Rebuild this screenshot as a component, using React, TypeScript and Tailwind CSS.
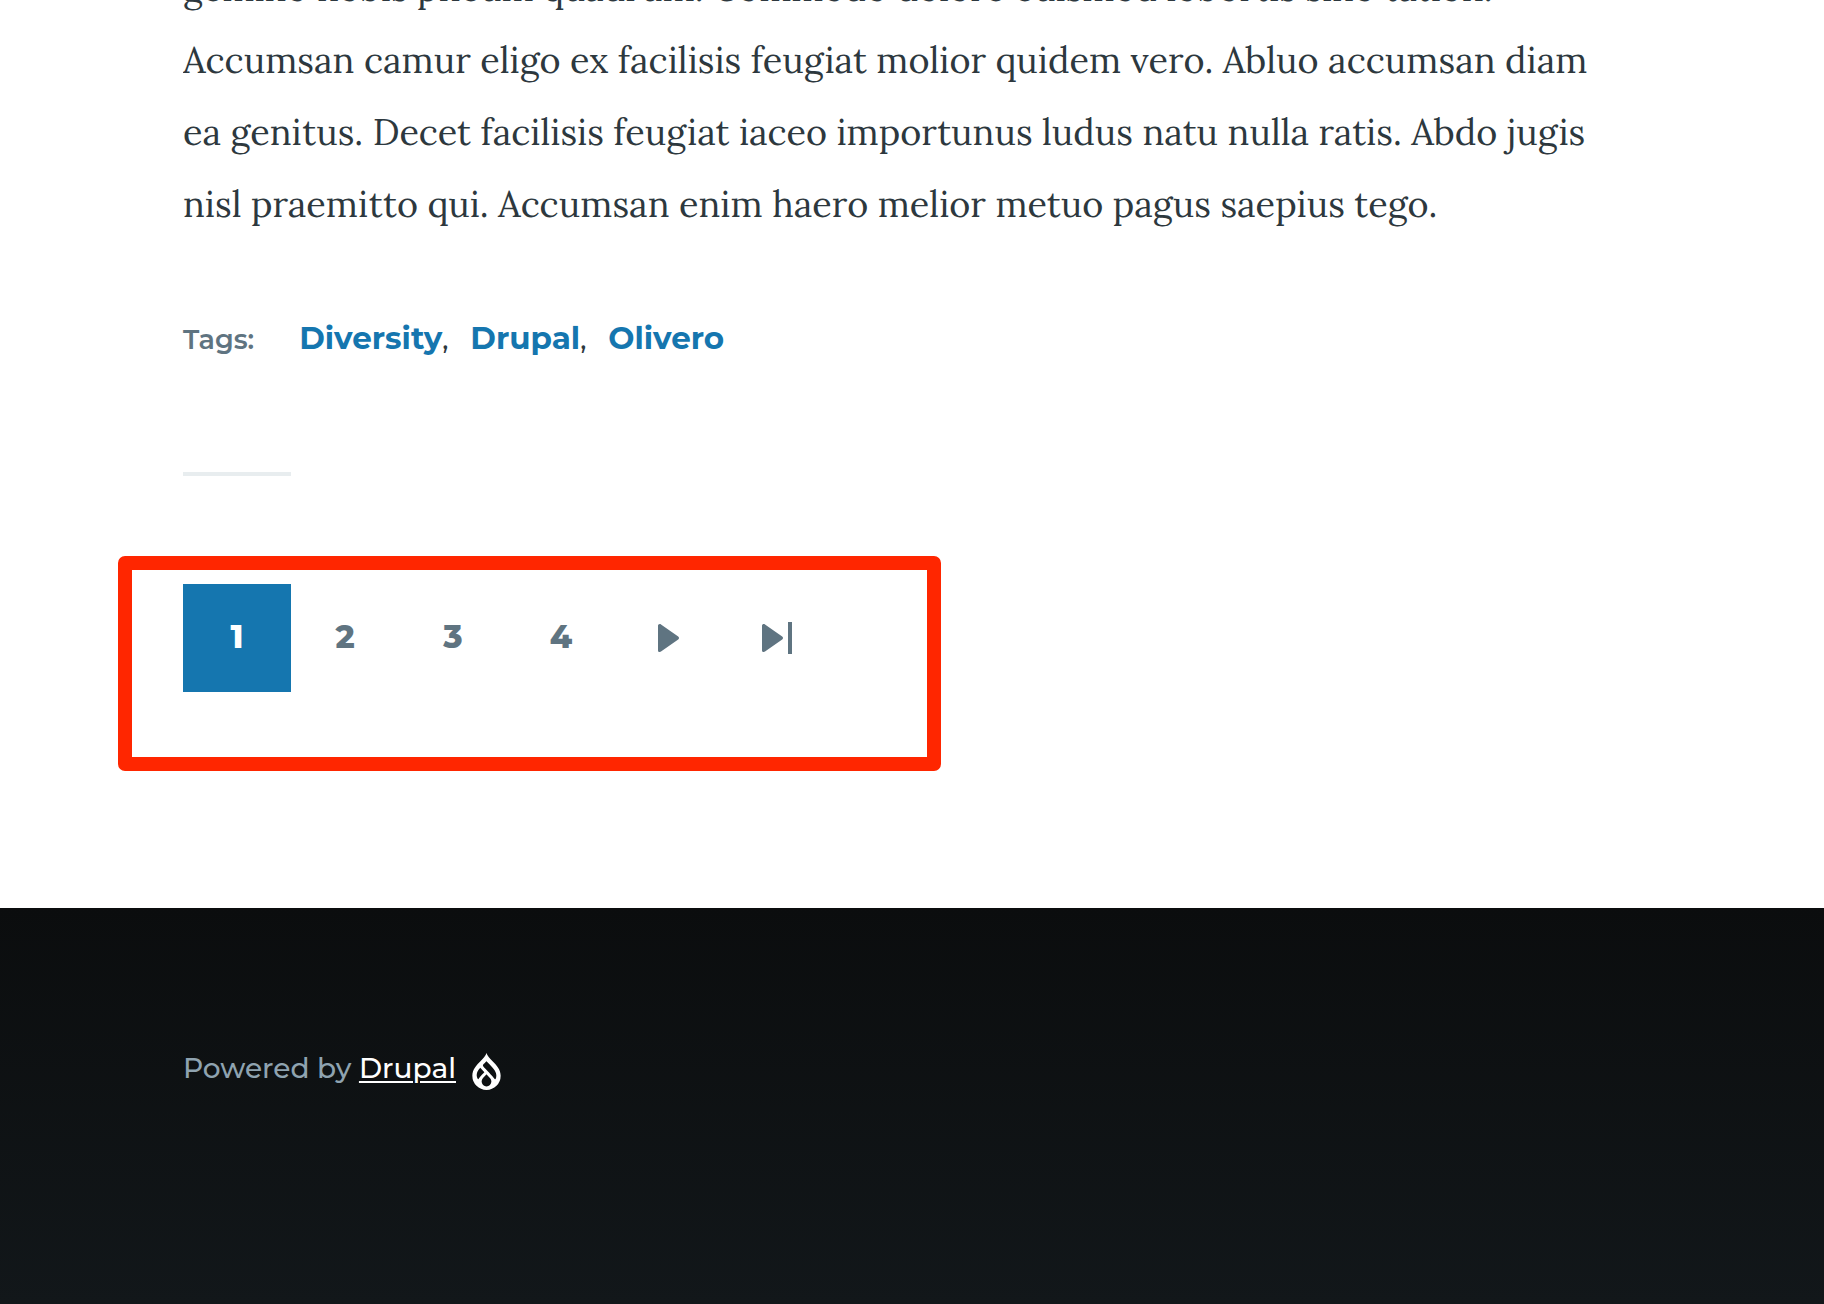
import { FC } from "react";
import { SiDrupal } from "react-icons/si";

const tags = ["Diversity", "Drupal", "Olivero"];
const pages = ["1", "2", "3", "4"];

const bodyLines = [
  "gemino nobis pneum quadrum. Commodo dolore euismod lobortis sino tation.",
  "Accumsan camur eligo ex facilisis feugiat molior quidem vero. Abluo accumsan diam",
  "ea genitus. Decet facilisis feugiat iaceo importunus ludus natu nulla ratis. Abdo jugis",
  "nisl praemitto qui. Accumsan enim haero melior metuo pagus saepius tego.",
];

const ArticleBody: FC = () => {
  return (
    <div className="overflow-hidden">
      <p className="-mt-12 font-['Lora','Liberation_Serif',serif] text-[36px] leading-[72px] text-[#2d383e]">
        {bodyLines.map((line) => (
          <span key={line} className="block whitespace-nowrap">
            {line}
          </span>
        ))}
      </p>
    </div>
  );
};

const Tags: FC = () => {
  return (
    <div className="mt-[62px] flex h-[72px] items-baseline gap-[45px] leading-[72px]">
      <h3 className="text-[27px] font-semibold text-[#5f7481]">Tags:</h3>
      <ul className="flex gap-[22px]">
        {tags.map((tag, i) => (
          <li key={tag} className="text-[#2d383e]">
            <a href="#" className="text-[31px] font-bold text-[#1576af]">
              {tag}
            </a>
            {i < tags.length - 1 && <span className="text-[27px] font-medium">,</span>}
          </li>
        ))}
      </ul>
    </div>
  );
};

const Pager: FC = () => {
  return (
    <nav aria-label="Pagination" className="relative mt-[108px]">
      <ul className="flex text-[32px] font-extrabold text-[#5f7481]">
        {pages.map((page) => (
          <li key={page}>
            <a
              href="#"
              className={
                page === "1"
                  ? "flex size-[108px] items-center justify-center bg-[#1576af] pb-0.5 text-white"
                  : "flex size-[108px] items-center justify-center pb-0.5"
              }
            >
              {page}
            </a>
          </li>
        ))}
        <li>
          <a href="#" aria-label="Next page" className="flex size-[108px] items-center justify-center">
            <svg width="22" height="28" viewBox="0 0 22 28" fill="currentColor">
              <path d="M0 1.6C0 .2 1.8-.5 3 .4L20.200 12.600C21.300 13.400 21.300 14.600 20.200 15.400L3 27.600C1.800 28.500 0 27.800 0 26.400Z" />
            </svg>
          </a>
        </li>
        <li>
          <a href="#" aria-label="Last page" className="flex size-[108px] items-center justify-center">
            <svg width="30" height="32" viewBox="0 0 30 32" fill="currentColor">
              <path d="M0 3.600C0 2.200 1.800 1.500 3 2.400L20.200 14.600C21.300 15.400 21.300 16.600 20.200 17.400L3 29.600C1.800 30.500 0 29.800 0 28.400Z" />
              <path d="M26 0H30V32H26Z" />
            </svg>
          </a>
        </li>
      </ul>
      {/* highlight frame over the pager */}
      <div className="pointer-events-none absolute -left-[65px] -top-7 h-[215px] w-[823px] rounded-[7px] border-[14px] border-[#ff2600]" />
    </nav>
  );
};

const Footer: FC = () => {
  return (
    <footer className="flex-1 bg-linear-to-b from-[#0b0d0e] to-[#12171a] pl-[183px] pt-[142px]">
      <div className="flex items-start gap-4 text-[28px] font-medium leading-9 text-[#8fa3b0]">
        <span>
          Powered by{" "}
          <a href="#" className="text-white underline decoration-2 underline-offset-3">
            Drupal
          </a>
        </span>
        <SiDrupal className="-mx-1 mt-[3px] size-[37px] text-white" />
      </div>
    </footer>
  );
};

const App: FC = () => {
  return (
    <div className="flex min-h-screen flex-col overflow-x-hidden bg-white font-['Metropolis','Montserrat','Inter',sans-serif]">
      <main className="pb-[216px] pl-[183px]">
        <ArticleBody />
        <Tags />
        <hr className="mt-[98px] w-[108px] border-t-4 border-[#e8edef]" />
        <Pager />
      </main>
      <Footer />
    </div>
  );
};

export default App;
